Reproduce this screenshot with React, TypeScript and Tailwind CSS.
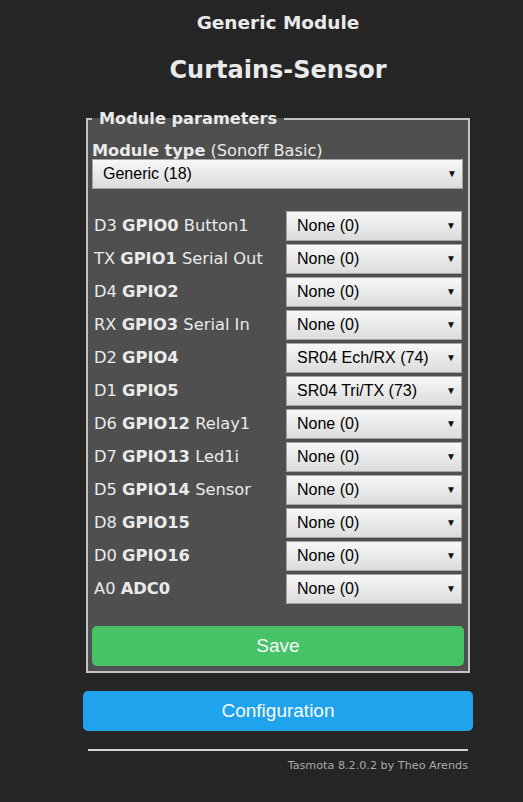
const rows: { pin: string; gpio: string; fn?: string; value: string }[] = [
  { pin: "D3", gpio: "GPIO0", fn: "Button1", value: "None (0)" },
  { pin: "TX", gpio: "GPIO1", fn: "Serial Out", value: "None (0)" },
  { pin: "D4", gpio: "GPIO2", value: "None (0)" },
  { pin: "RX", gpio: "GPIO3", fn: "Serial In", value: "None (0)" },
  { pin: "D2", gpio: "GPIO4", value: "SR04 Ech/RX (74)" },
  { pin: "D1", gpio: "GPIO5", value: "SR04 Tri/TX (73)" },
  { pin: "D6", gpio: "GPIO12", fn: "Relay1", value: "None (0)" },
  { pin: "D7", gpio: "GPIO13", fn: "Led1i", value: "None (0)" },
  { pin: "D5", gpio: "GPIO14", fn: "Sensor", value: "None (0)" },
  { pin: "D8", gpio: "GPIO15", value: "None (0)" },
  { pin: "D0", gpio: "GPIO16", value: "None (0)" },
  { pin: "A0", gpio: "ADC0", value: "None (0)" },
];

function FakeSelect({ value, className }: { value: string; className?: string }) {
  return (
    <div
      className={
        "flex items-center justify-between border border-[#a4a4a4] bg-gradient-to-b from-[#f7f7f7] to-[#dcdcdc] pl-[10px] pr-[5px] text-[16px] text-black font-['Liberation_Sans',Arial,sans-serif] " +
        (className ?? "")
      }
    >
      <span>{value}</span>
      <span className="text-[10px] leading-none text-[#111]">▼</span>
    </div>
  );
}

export default function App() {
  return (
    <div className="min-h-[802px] bg-[#252525] text-[#eaeaea] font-['DejaVu_Sans',Verdana,sans-serif]">
      <div className="ml-[83px] w-[390px] pt-[12px]">
        <h3 className="text-center text-[18.5px] font-bold leading-[22px]">Generic Module</h3>
        <h2 className="mt-[22px] text-center text-[24px] font-bold leading-[28px]">Curtains-Sensor</h2>

        <fieldset className="mx-[3px] mt-[25px] border-2 border-[#c4c4c4] bg-[#4f4f4f] px-[4px] pb-[5px]">
          <legend className="px-[7px] text-[16.2px] font-bold leading-[20px]">Module parameters</legend>
          <div className="mt-[14px] text-[16.2px] leading-[16px]">
            <b>Module type</b> (Sonoff Basic)
          </div>
          <FakeSelect value="Generic (18)" className="h-[30px] mr-[1px]" />

          <div className="mt-[22px] flex flex-col gap-[3px]">
            {rows.map((r) => (
              <div key={r.gpio} className="flex items-center justify-between">
                <div className="pl-[2px] text-[16.3px] leading-[20px]">
                  {r.pin} <b>{r.gpio}</b>
                  {r.fn ? " " + r.fn : ""}
                </div>
                <FakeSelect value={r.value} className="h-[30px] w-[176px] mr-[2px]" />
              </div>
            ))}
          </div>

          <button className="mt-[22px] h-[40px] w-full rounded-[5px] bg-[#47c266] text-[19px] text-[#fafafa] font-['Liberation_Sans',Arial,sans-serif]">
            Save
          </button>
        </fieldset>

        <button className="mt-[18px] h-[40px] w-full rounded-[5px] bg-[#1fa3ec] text-[19px] text-[#fafafa] font-['Liberation_Sans',Arial,sans-serif]">
          Configuration
        </button>

        <div className="mx-[5px] mt-[18px] h-[2px] bg-[#d4d4d4]" />
        <div className="mx-[5px] mt-[8px] text-right text-[11.2px] leading-[14px] text-[#aaaaaa]">
          Tasmota 8.2.0.2 by Theo Arends
        </div>
      </div>
    </div>
  );
}
